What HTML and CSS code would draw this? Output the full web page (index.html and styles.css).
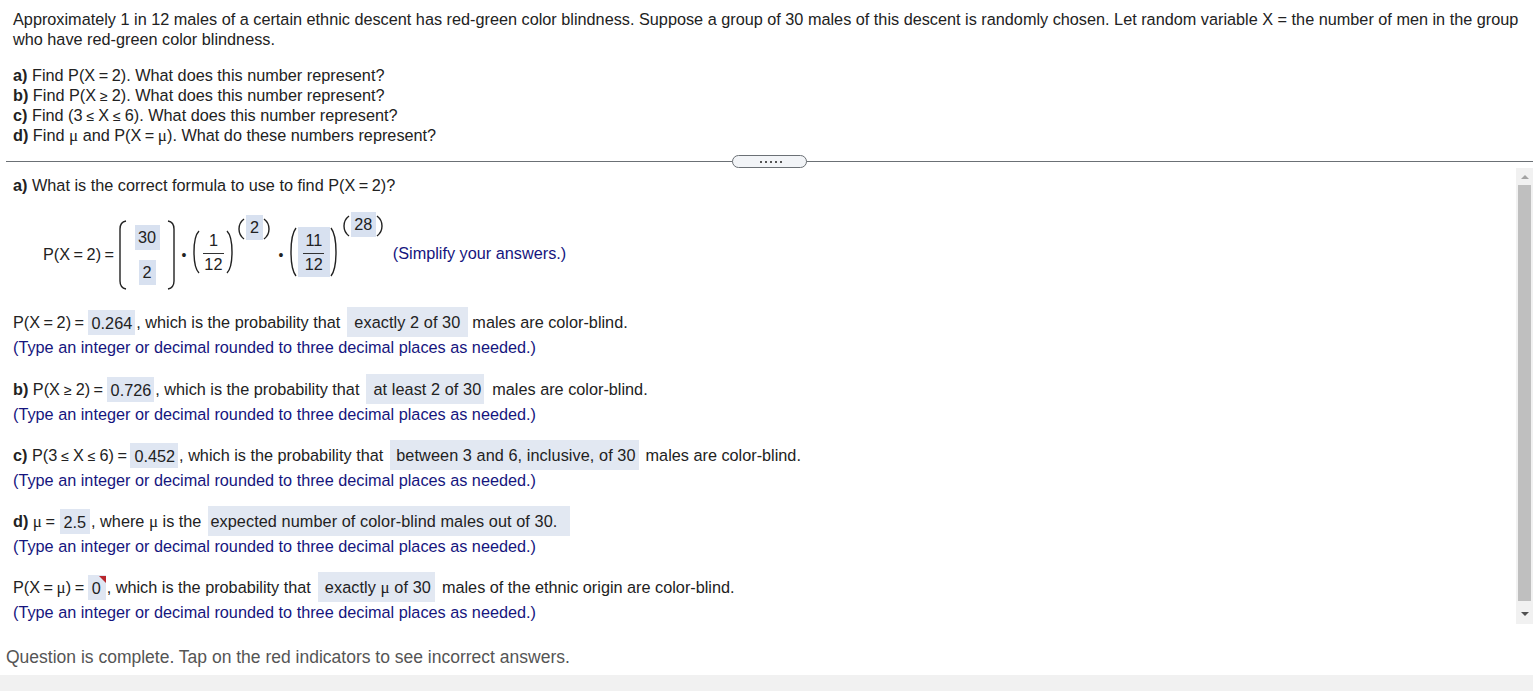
FILE: index.html
```html
<!DOCTYPE html>
<html lang="en">
<head>
<meta charset="utf-8">
<title>Question</title>
<link rel="stylesheet" href="styles.css">
</head>
<body>
<div class="page">
  <section class="question">
    <p class="intro">Approximately 1 in 12 males of a certain ethnic descent has red-green color blindness. Suppose a group of 30 males of this descent is randomly chosen. Let random variable X = the number of men in the group who have red-green color blindness.</p>
    <ul class="parts">
      <li><b>a)</b> Find P(X<span class="op">=</span>2). What does this number represent?</li>
      <li><b>b)</b> Find P(X<span class="op small">≥</span>2). What does this number represent?</li>
      <li><b>c)</b> Find (3<span class="op small">≤</span>X<span class="op small">≤</span>6). What does this number represent?</li>
      <li><b>d)</b> Find <span class="mu">μ</span> and P(X<span class="op">=</span><span class="mu">μ</span>). What do these numbers represent?</li>
    </ul>
  </section>

  <div class="divider"><span class="handle"><i></i><i></i><i></i><i></i><i></i></span></div>

  <section class="work">
    <div class="content">
      <p class="prompt"><b>a)</b> What is the correct formula to use to find P(X<span class="op">=</span>2)?</p>

      <div class="formula">
        <span class="lhs">P(X<span class="op">=</span>2)<span class="op last">=</span></span>
        <span class="binom">
          <svg class="bracket" width="9" height="70" viewBox="0 0 9 70"><path d="M8 1C3 2 2 5 2 9V61C2 65 3 68 8 69" fill="none" stroke="#222" stroke-width="1.4"/></svg>
          <span class="binom-cells"><span class="cell wide">30</span><span class="cell">2</span></span>
          <svg class="bracket" width="9" height="70" viewBox="0 0 9 70"><path d="M1 1C6 2 7 5 7 9V61C7 65 6 68 1 69" fill="none" stroke="#222" stroke-width="1.4"/></svg>
        </span>
        <span class="dot">•</span>
        <span class="fracwrap">
          <svg class="paren" width="7" height="44" viewBox="0 0 7 44"><path d="M6 1C2 5 1 13 1 22S2 39 6 43" fill="none" stroke="#222" stroke-width="1.4"/></svg>
          <span class="frac"><span class="numer">1</span><span class="den">12</span></span>
          <svg class="paren" width="7" height="44" viewBox="0 0 7 44"><path d="M1 1C5 5 6 13 6 22S5 39 1 43" fill="none" stroke="#222" stroke-width="1.4"/></svg>
        </span>
        <span class="power one">
          <svg class="paren" width="7" height="22" viewBox="0 0 7 22"><path d="M6 1C2 4 1 8 1 11S2 18 6 21" fill="none" stroke="#222" stroke-width="1.4"/></svg>
          <span class="cell exp">2</span>
          <svg class="paren" width="7" height="22" viewBox="0 0 7 22"><path d="M1 1C5 4 6 8 6 11S5 18 1 21" fill="none" stroke="#222" stroke-width="1.4"/></svg>
        </span>
        <span class="dot second">•</span>
        <span class="fracwrap">
          <svg class="paren" width="7" height="50" viewBox="0 0 7 50"><path d="M6 1C2 6 1 16 1 25S2 44 6 49" fill="none" stroke="#222" stroke-width="1.4"/></svg>
          <span class="frac filled"><span class="numer">11</span><span class="den">12</span></span>
          <svg class="paren" width="7" height="50" viewBox="0 0 7 50"><path d="M1 1C5 6 6 16 6 25S5 44 1 49" fill="none" stroke="#222" stroke-width="1.4"/></svg>
        </span>
        <span class="power two">
          <svg class="paren" width="7" height="22" viewBox="0 0 7 22"><path d="M6 1C2 4 1 8 1 11S2 18 6 21" fill="none" stroke="#222" stroke-width="1.4"/></svg>
          <span class="cell exp wide">28</span>
          <svg class="paren" width="7" height="22" viewBox="0 0 7 22"><path d="M1 1C5 4 6 8 6 11S5 18 1 21" fill="none" stroke="#222" stroke-width="1.4"/></svg>
        </span>
        <span class="hint simplify">(Simplify your answers.)</span>
      </div>

      <div class="group first-group">
        <p class="line">P(X<span class="op">=</span>2)<span class="op last">=</span><span class="num">0.264</span>, which is the probability that<span class="choice pad-7-8 after-4">exactly 2 of 30</span>males are color-blind.</p>
        <p class="hint">(Type an integer or decimal rounded to three decimal places as needed.)</p>
      </div>
      <div class="group second-group">
        <p class="line"><b>b)</b> P(X<span class="op small">≥</span>2)<span class="op last">=</span><span class="num">0.726</span>, which is the probability that<span class="choice pad-7-3 after-8">at least 2 of 30</span>males are color-blind.</p>
        <p class="hint">(Type an integer or decimal rounded to three decimal places as needed.)</p>
      </div>
      <div class="group">
        <p class="line"><b>c)</b> P(3<span class="op small">≤</span>X<span class="op small">≤</span>6)<span class="op last">=</span><span class="num">0.452</span>, which is the probability that<span class="choice pad-6-3 after-7">between 3 and 6, inclusive, of 30</span>males are color-blind.</p>
        <p class="hint">(Type an integer or decimal rounded to three decimal places as needed.)</p>
      </div>
      <div class="group">
        <p class="line"><b>d)</b> <span class="mu">μ</span><span class="op last">=</span><span class="num spaced">2.5</span>, where <span class="mu">μ</span> is the<span class="choice pad-2-13">expected number of color-blind males out of 30.</span></p>
        <p class="hint">(Type an integer or decimal rounded to three decimal places as needed.)</p>
      </div>
      <div class="group">
        <p class="line">P(X<span class="op">=</span><span class="mu">μ</span>)<span class="op last">=</span><span class="num wrong">0</span>, which is the probability that<span class="choice pad-7-4 after-7">exactly <span class="mu">μ</span> of 30</span>males of the ethnic origin are color-blind.</p>
        <p class="hint">(Type an integer or decimal rounded to three decimal places as needed.)</p>
      </div>
    </div>
    <div class="scrollbar">
      <span class="arrow up"></span>
      <span class="thumb"></span>
      <span class="arrow down"></span>
    </div>
  </section>

  <p class="status">Question is complete. Tap on the red indicators to see incorrect answers.</p>
  <div class="bottom-bar"></div>
</div>
</body>
</html>
```
FILE: styles.css
```css
* { box-sizing: border-box; }
html, body { margin: 0; padding: 0; }
body {
  width: 1533px;
  height: 691px;
  overflow: hidden;
  background: #fff;
  color: #222;
  font-family: "Liberation Sans", Arial, sans-serif;
  font-size: 16.25px;
  line-height: 20px;
}
p { margin: 0; }
.page { display: flex; flex-direction: column; height: 691px; }

.question { padding: 9px 13px 0; height: 150px; }
.parts { list-style: none; margin: 16px 0 0; padding: 0; }
.parts li { height: 20px; }
.op { margin: 0 3.5px; }
.op.small { font-size: 14px; margin: 0 4px; }
.mu { font-family: "Liberation Serif", serif; font-size: 17px; }

.divider {
  height: 24px;
  margin-left: 6px;
  position: relative;
  display: flex;
  justify-content: center;
  align-items: flex-start;
}
.divider::before {
  content: "";
  position: absolute;
  left: 0; right: 0; top: 11px;
  height: 1px;
  background: #6b7075;
}
.handle {
  position: relative;
  margin-top: 5px;
  margin-left: -1px;
  width: 75px;
  height: 13px;
  padding-left: 4px;
  border: 1px solid #6b7075;
  border-radius: 7px;
  background: #f2f4f7;
  display: flex;
  align-items: center;
  justify-content: center;
  gap: 3px;
}
.handle i { width: 2px; height: 2px; background: #555; }

.work { display: flex; height: 456px; margin-top: -6px; }
.content { flex: 1; padding: 7px 0 0 13px; min-width: 0; }
.prompt { height: 20px; }
.formula { display: flex; align-items: center; height: 88px; margin-top: 16px; padding-left: 30px; }
.lhs { width: 75px; white-space: nowrap; flex: none; margin-bottom: 2px; }
.binom { display: flex; align-items: center; }
.binom-cells { display: flex; flex-direction: column; align-items: center; gap: 10px; width: 40px; }
.cell { display: block; background: #d8e1f0; text-align: center; line-height: 25px; width: 17px; }
.cell.wide { width: 25px; }
.dot { font-size: 14px; margin: 0 6.5px 0 5.5px; }
.dot.second { margin: 0 6.5px 0 8.5px; }
.fracwrap { display: flex; align-items: center; margin-bottom: 7px; }
.frac { display: flex; flex-direction: column; align-items: center; width: 21px; margin: 0 2px 0 3px; line-height: 20px; }
.frac .numer { margin-bottom: 3px; }
.frac .den { border-top: 1px solid #333; width: 21px; text-align: center; }
.frac.filled { width: 32px; background: #d8e1f0; margin: 0 0 0 1px; padding: 3px 0; }
.power { display: flex; align-items: flex-end; align-self: flex-start; }
.power .exp { margin-left: 1px; }
.power.one { margin: 4px 0 0 5px; }
.power.two { margin: 1px 0 0 6px; }
.hint { color: #15157e; }
.simplify { margin-left: 10px; margin-bottom: 4px; }

.group { margin-top: 21px; }
.first-group { margin-top: 13px; }
.second-group { margin-top: 22px; }
.line { height: 20px; white-space: nowrap; }
.group .hint { margin-top: 5px; }
.num {
  background: #dfe6f2;
  padding: 3.5px 3px 3.5px 4px;
  margin-right: 1px;
  position: relative;
}
.num.spaced { margin-left: 2px; padding-left: 3px; padding-right: 4px; }
.num.wrong { padding-right: 5px; }
.choice {
  background: #e2e8f2;
  padding-top: 6px;
  padding-bottom: 6px;
  margin-left: 7px;
  letter-spacing: 0.08px;
}
.pad-7-8 { padding-left: 7px; padding-right: 8px; }
.pad-7-3 { padding-left: 7px; padding-right: 3px; }
.pad-6-3 { padding-left: 6px; padding-right: 3px; }
.pad-2-13 { padding-left: 2px; padding-right: 13px; }
.pad-7-4 { padding-left: 7px; padding-right: 4px; }
.after-4 { margin-right: 4px; }
.after-7 { margin-right: 7px; }
.after-8 { margin-right: 8px; }
.wrong::after {
  content: "";
  position: absolute;
  right: 0; top: 1px;
  border-top: 7px solid #b8262c;
  border-left: 7px solid transparent;
}

.scrollbar {
  width: 17px;
  flex: none;
  background: #f1f1f1;
  display: flex;
  flex-direction: column;
  align-items: center;
}
.thumb { width: 13px; flex: 1; background: #bfbfbf; margin-bottom: 6px; }
.arrow { width: 0; height: 0; border-left: 4px solid transparent; border-right: 4px solid transparent; flex: none; }
.arrow.up { border-bottom: 4px solid #a3a3a3; margin: 7px 0 6px; }
.arrow.down { border-top: 4px solid #505050; margin: 5px 0 8px; }

.status { margin: 23px 0 0 6px; color: #555; font-size: 17.5px; line-height: 20px; }
.bottom-bar { margin-top: 8px; flex: 1; background: #f1f1f1; }
```
